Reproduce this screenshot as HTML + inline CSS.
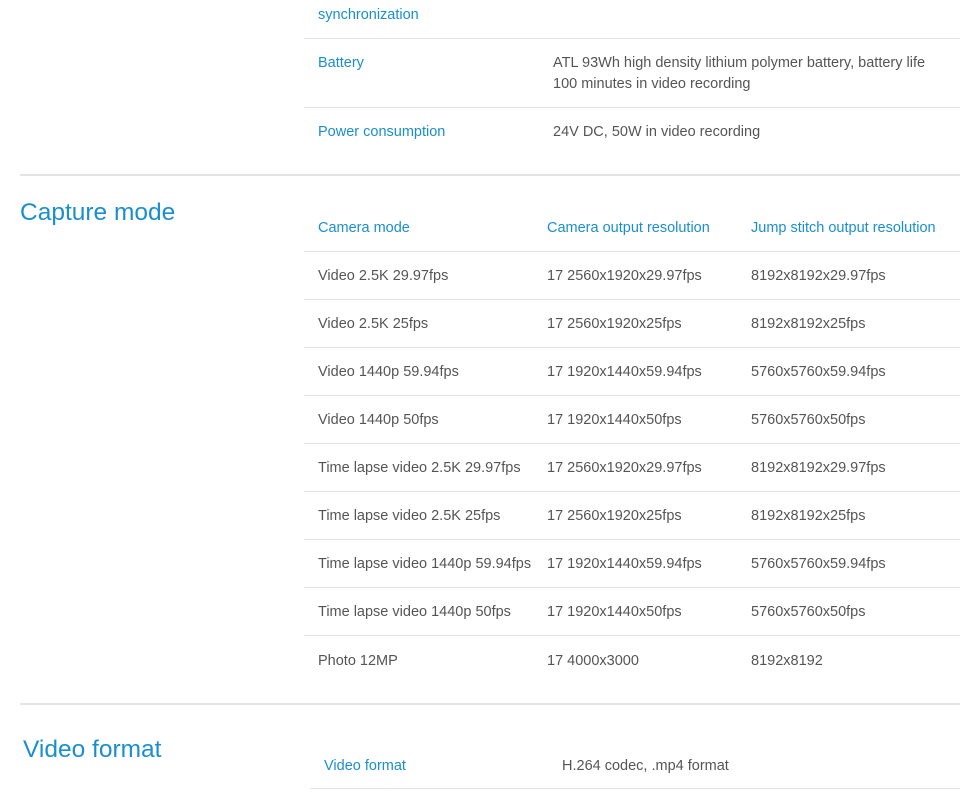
<!DOCTYPE html>
<html><head><style>
body{margin:0;width:960px;height:793px;background:#fff;font-family:"Liberation Sans",sans-serif;position:relative;overflow:hidden}
.t{position:absolute;font-size:14.5px;line-height:20px;white-space:nowrap;letter-spacing:0;margin-top:1px}
.b{color:#1a8fcf}.g{color:#555}
.h{position:absolute;font-size:24.5px;color:#1a8fcf;line-height:30px;letter-spacing:0}
.l{position:absolute;height:1px;background:#e3e3e3;right:0}
</style></head><body>
<div class="t b" style="left:318px;top:4px">synchronization</div>
<div class="l" style="left:304px;top:38px"></div>
<div class="t b" style="left:318px;top:52px">Battery</div>
<div class="t g" style="left:553px;top:52px">ATL 93Wh high density lithium polymer battery, battery life</div>
<div class="t g" style="left:553px;top:73px">100 minutes in video recording</div>
<div class="l" style="left:304px;top:107px"></div>
<div class="t b" style="left:318px;top:121px">Power consumption</div>
<div class="t g" style="left:553px;top:121px">24V DC, 50W in video recording</div>
<div class="l" style="left:20px;top:174px;height:2px"></div>
<div class="h" style="left:20px;top:198px">Capture mode</div>
<div class="t b" style="left:318px;top:217px">Camera mode</div>
<div class="t b" style="left:547px;top:217px">Camera output resolution</div>
<div class="t b" style="left:751px;top:217px">Jump stitch output resolution</div>
<div class="l" style="left:304px;top:251px"></div>

<div class="t g" style="left:318px;top:265px">Video 2.5K 29.97fps</div><div class="t g" style="left:547px;top:265px">17 2560x1920x29.97fps</div><div class="t g" style="left:751px;top:265px">8192x8192x29.97fps</div>
<div class="l" style="left:304px;top:299px"></div>
<div class="t g" style="left:318px;top:313px">Video 2.5K 25fps</div><div class="t g" style="left:547px;top:313px">17 2560x1920x25fps</div><div class="t g" style="left:751px;top:313px">8192x8192x25fps</div>
<div class="l" style="left:304px;top:347px"></div>
<div class="t g" style="left:318px;top:361px">Video 1440p 59.94fps</div><div class="t g" style="left:547px;top:361px">17 1920x1440x59.94fps</div><div class="t g" style="left:751px;top:361px">5760x5760x59.94fps</div>
<div class="l" style="left:304px;top:395px"></div>
<div class="t g" style="left:318px;top:409px">Video 1440p 50fps</div><div class="t g" style="left:547px;top:409px">17 1920x1440x50fps</div><div class="t g" style="left:751px;top:409px">5760x5760x50fps</div>
<div class="l" style="left:304px;top:443px"></div>
<div class="t g" style="left:318px;top:457px">Time lapse video 2.5K 29.97fps</div><div class="t g" style="left:547px;top:457px">17 2560x1920x29.97fps</div><div class="t g" style="left:751px;top:457px">8192x8192x29.97fps</div>
<div class="l" style="left:304px;top:491px"></div>
<div class="t g" style="left:318px;top:505px">Time lapse video 2.5K 25fps</div><div class="t g" style="left:547px;top:505px">17 2560x1920x25fps</div><div class="t g" style="left:751px;top:505px">8192x8192x25fps</div>
<div class="l" style="left:304px;top:539px"></div>
<div class="t g" style="left:318px;top:553px">Time lapse video 1440p 59.94fps</div><div class="t g" style="left:547px;top:553px">17 1920x1440x59.94fps</div><div class="t g" style="left:751px;top:553px">5760x5760x59.94fps</div>
<div class="l" style="left:304px;top:587px"></div>
<div class="t g" style="left:318px;top:601px">Time lapse video 1440p 50fps</div><div class="t g" style="left:547px;top:601px">17 1920x1440x50fps</div><div class="t g" style="left:751px;top:601px">5760x5760x50fps</div>
<div class="l" style="left:304px;top:635px"></div>
<div class="t g" style="left:318px;top:650px">Photo 12MP</div><div class="t g" style="left:547px;top:650px">17 4000x3000</div><div class="t g" style="left:751px;top:650px">8192x8192</div>

<div class="l" style="left:20px;top:703px;height:2px"></div>
<div class="h" style="left:23px;top:735px">Video format</div>
<div class="t b" style="left:324px;top:755px">Video format</div>
<div class="t g" style="left:562px;top:755px">H.264 codec, .mp4 format</div>
<div class="l" style="left:310px;top:788px"></div>
</body></html>
